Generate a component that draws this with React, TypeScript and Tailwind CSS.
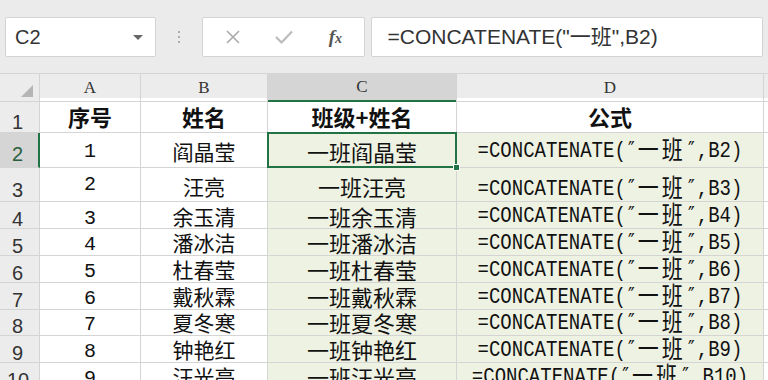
import React from 'react';

const grid = 'grid grid-cols-[40px_101px_127px_189px_307px_1fr]';
const line = 'border-[#d4d4d4]';
const mono = "font-['Liberation_Mono','DejaVu_Sans_Mono','Noto_Sans_CJK_SC',monospace]";
const cjk = "font-['Noto_Sans_CJK_SC',sans-serif]";
const sans = "font-['Liberation_Sans','Noto_Sans_CJK_SC',sans-serif]";

// pb values: [row number, digits, cjk, formula]
const rows = [
  { n: 2, a: '1', b: '阎晶莹', h: 'h-[35px]', p: ['pb-[5px]', 'pb-[7px]', 'pb-[5px]', 'pb-[8px]'] },
  { n: 3, a: '2', b: '汪亮', h: 'h-[34px]', p: ['pb-[3px]', 'pb-[8px]', 'pb-[4px]', 'pb-[4px]'] },
  { n: 4, a: '3', b: '余玉清', h: 'h-[27px]', p: ['pb-[1px]', 'pb-[1px]', 'pb-[1px]', 'pb-[4px]'] },
  { n: 5, a: '4', b: '潘冰洁', h: 'h-[27px]', p: ['pb-[1px]', 'pb-[2px]', 'pb-[2px]', 'pb-[4px]'] },
  { n: 6, a: '5', b: '杜春莹', h: 'h-[27px]', p: ['pb-[1px]', 'pb-[2px]', 'pb-[2px]', 'pb-[4px]'] },
  { n: 7, a: '6', b: '戴秋霖', h: 'h-[27px]', p: ['pb-[1px]', 'pb-[2px]', 'pb-[2px]', 'pb-[4px]'] },
  { n: 8, a: '7', b: '夏冬寒', h: 'h-[26px]', p: ['pb-[1px]', 'pb-[2px]', 'pb-[2px]', 'pb-[4px]'] },
  { n: 9, a: '8', b: '钟艳红', h: 'h-[27px]', p: ['pb-[1px]', 'pb-[2px]', 'pb-[2px]', 'pb-[4px]'] },
  { n: 10, a: '9', b: '汪光亮', h: 'h-[27px]', p: ['pb-[1px]', 'pb-[2px]', 'pb-[2px]', 'pb-[4px]'] },
];

function Quote() {
  return <span className="inline-block w-[11px] text-center font-['DejaVu_Sans',sans-serif] text-[18px]">″</span>;
}

function Formula({ r }: { r: number }) {
  return (
    <span className={`${mono} inline-block scale-y-[1.2] text-[19px] leading-[16px] text-[#111] whitespace-nowrap`}>
      =CONCATENATE(<Quote />
      <span className={`${cjk} relative top-[1px] ml-[1px] text-[21px] tracking-[3px]`}>一班</span>
      <Quote />,B{r})
    </span>
  );
}

function App() {
  return (
    <div className="h-[380px] w-[768px] overflow-hidden bg-[#ebebeb]">
      {/* Toolbar */}
      <div className="flex h-[73px] items-start px-[5px] pt-[17px]">
        <div className="flex h-[40px] w-[151px] items-center justify-between rounded-[2px] border border-[#d3d3d3] bg-white pl-[9px] pr-[12px]">
          <span className={`${sans} text-[20px] text-[#333]`}>C2</span>
          <span className="h-0 w-0 border-x-[5px] border-t-[5px] border-x-transparent border-t-[#666]" />
        </div>
        <div className="flex h-[40px] w-[46px] flex-col items-center justify-center gap-[3px]">
          <span className="h-[2px] w-[2px] rounded-full bg-[#999]" />
          <span className="h-[2px] w-[2px] rounded-full bg-[#999]" />
          <span className="h-[2px] w-[2px] rounded-full bg-[#999]" />
        </div>
        <div className="flex h-[40px] w-[163px] items-center rounded-[2px] border border-[#d3d3d3] bg-white">
          <svg width="16" height="16" viewBox="0 0 16 16" className="ml-[22px]">
            <path d="M2 2 L14 14 M14 2 L2 14" stroke="#aaa" strokeWidth="1.6" fill="none" />
          </svg>
          <svg width="20" height="16" viewBox="0 0 20 16" className="ml-[33px]">
            <path d="M2 8 L7.5 13.5 L18 2.5" stroke="#bbb" strokeWidth="2.2" fill="none" />
          </svg>
          <span className="ml-[35px] font-['Liberation_Serif',serif] text-[19px] italic font-bold text-[#555]">
            f<span className="text-[14px]">x</span>
          </span>
        </div>
        <div className="ml-[6px] flex h-[40px] w-[393px] items-center rounded-[2px] border border-[#d3d3d3] bg-white pl-[16px]">
          <span className={`${sans} text-[21px] text-[#333]`}>=CONCATENATE("一班",B2)</span>
        </div>
      </div>

      {/* Column headers */}
      <div className={`${grid} h-[25px] border-t ${line} bg-[#ececec]`}>
        <div className={`relative border-r border-b ${line}`}>
          <span className="absolute bottom-[4px] right-[6px] h-0 w-0 border-b-[12px] border-l-[12px] border-b-[#b5b5b5] border-l-transparent" />
        </div>
        {['A', 'B'].map((c) => (
          <div key={c} className={`flex items-center justify-center border-r border-b ${line} font-['Liberation_Serif',serif] text-[17px] text-[#333]`}>
            {c}
          </div>
        ))}
        <div className={`flex items-center justify-center border-r ${line} border-b-2 border-b-[#217346] bg-[#d5d5d5] font-['Liberation_Serif',serif] text-[17px] text-[#333]`}>
          C
        </div>
        <div className={`flex items-center justify-center border-r border-b ${line} font-['Liberation_Serif',serif] text-[17px] text-[#333]`}>
          D
        </div>
        <div className={`border-b ${line}`} />
      </div>

      {/* Row 1 */}
      <div className={`${grid} h-[35px] bg-white`}>
        <div className={`flex items-end border-r border-b ${line} bg-[#ececec] pb-[2px] pl-[12px] ${sans} text-[20px] leading-[16px] text-[#333]`}>1</div>
        {['序号', '姓名', '班级+姓名', '公式'].map((t) => (
          <div key={t} className={`flex items-end justify-center border-r border-b ${line} pb-[5px] ${cjk} text-[22px] font-bold leading-none text-[#111]`}>
            {t}
          </div>
        ))}
        <div className={`border-b ${line}`} />
      </div>

      {/* Data rows */}
      {rows.map((r) => {
        const sel = r.n === 2;
        return (
          <div key={r.n} className={`${grid} ${r.h} bg-white`}>
            <div
              className={`flex items-end border-b ${line} ${r.n === 10 ? 'pl-[7px]' : 'pl-[12px]'} ${r.p[0]} ${sans} text-[20px] leading-[16px] ${
                sel ? 'border-r-2 border-r-[#217346] bg-[#d5d5d5] text-[#2a5f3e]' : `border-r ${line} bg-[#ececec] text-[#333]`
              }`}
            >
              {r.n}
            </div>
            <div className={`flex items-end justify-center border-r border-b ${line} ${r.p[1]} ${mono} text-[20px] leading-[16px] text-[#111]`}>
              {r.a}
            </div>
            <div className={`flex items-end justify-center border-r border-b ${line} ${r.p[2]} ${cjk} text-[21px] leading-none text-[#111]`}>
              {r.b}
            </div>
            <div className={`relative flex items-end justify-center border-r border-b ${line} bg-[#eef2e3] ${r.p[2]} ${cjk} text-[22px] leading-none text-[#111] ${sel ? 'z-10' : ''}`}>
              一班{r.b}
              {sel && (
                <>
                  <span className="pointer-events-none absolute inset-[-1px] border-2 border-[#217346]" />
                  <span className="absolute bottom-[-4px] right-[-4px] h-[7px] w-[7px] border border-white bg-[#217346]" />
                </>
              )}
            </div>
            <div className={`flex items-end justify-center border-r border-b ${line} bg-[#eef2e3] ${r.p[3]}`}>
              <Formula r={r.n} />
            </div>
            <div className={`border-b ${line} bg-white`} />
          </div>
        );
      })}
    </div>
  );
}

export default App;
